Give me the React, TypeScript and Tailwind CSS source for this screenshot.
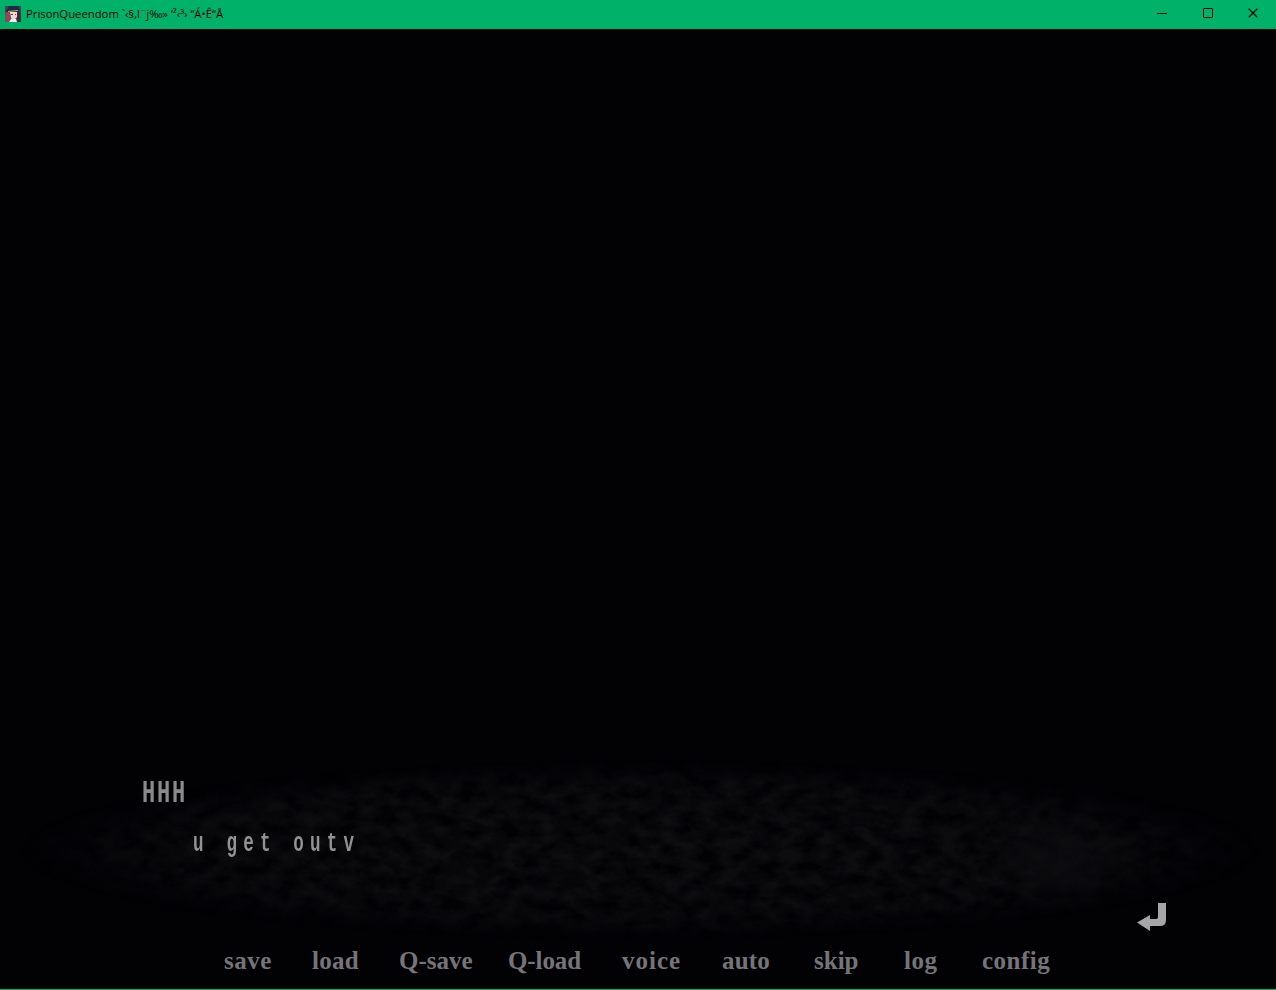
import React from "react";
import { X } from "lucide-react";

const menuItems = [
  { label: "save", width: "w-[88px]", spacing: "tracking-[0.5px]" },
  { label: "load", width: "w-[87px]", spacing: "tracking-[0.3px]" },
  { label: "Q-save", width: "w-[109px]", spacing: "tracking-[0px]" },
  { label: "Q-load", width: "w-[114px]", spacing: "tracking-[-0.1px]" },
  { label: "voice", width: "w-[100px]", spacing: "tracking-[1px]" },
  { label: "auto", width: "w-[92px]", spacing: "tracking-[0.2px]" },
  { label: "skip", width: "w-[90px]", spacing: "tracking-[0px]" },
  { label: "log", width: "w-[78px]", spacing: "tracking-[0.5px]" },
  { label: "config", width: "w-[80px]", spacing: "tracking-[0.5px]" },
];

const AppIcon = () => (
  <svg width="16" height="16" viewBox="0 0 16 16" className="shrink-0">
    <rect width="16" height="16" fill="#4a4050" />
    <path d="M1 5 L4 0 H13 L15 4 L14 6 H2 Z" fill="#1c2a4a" />
    <path d="M3 5 L13 4 V5 L3 6 Z" fill="#c9a860" />
    <path d="M5 6 H12 V11 L10 13 H7 L5 11 Z" fill="#f0d8d4" />
    <path d="M1 6 H5 L6 11 L4 16 H0 V9 Z" fill="#8a4a58" />
    <path d="M12 6 H15 L16 16 H12 Z" fill="#3c2a3a" />
    <rect x="6" y="8" width="2" height="1" fill="#8a2a3a" />
    <rect x="10" y="8" width="1" height="1" fill="#8a2a3a" />
    <path d="M6 13 H11 L12 16 H4 Z" fill="#f4f0f0" />
  </svg>
);

const TitleBar = () => (
  <div className="flex h-[29px] shrink-0 items-center bg-[#00b16a] text-black">
    <div className="ml-[5px] flex items-center gap-[5px] pb-[2px]">
      <AppIcon />
      <span className="font-['Open_Sans',sans-serif] text-[11.3px] leading-none whitespace-nowrap">
        PrisonQueendom `‹§‚l¨j‰» ’²‹³› “Á•Ê“Å
      </span>
    </div>
    <div className="ml-auto flex h-full items-center pb-[3px]">
      <div className="flex w-[46px] justify-center pl-[2px]">
        <div className="h-px w-[10px] bg-black" />
      </div>
      <div className="flex w-[46px] justify-center pl-[2px]">
        <div className="h-[10px] w-[10px] rounded-[1px] border border-black" />
      </div>
      <div className="flex w-[46px] justify-center">
        <X size={16} strokeWidth={1.1} absoluteStrokeWidth />
      </div>
    </div>
  </div>
);

// the grimy smear behind the message window
const Grime = () => (
  <svg className="absolute inset-0 h-full w-full" viewBox="0 0 1276 240" preserveAspectRatio="none">
    <defs>
      <filter id="grain" x="0" y="0" width="100%" height="100%" colorInterpolationFilters="sRGB">
        <feTurbulence type="fractalNoise" baseFrequency="0.05 0.08" numOctaves="5" seed="7" />
        <feColorMatrix values="0 0 0 0 0.055  0 0 0 0 0.052  0 0 0 0 0.063  2 0 0 0 -0.45" />
      </filter>
      <radialGradient id="smear" cx="0.5" cy="0.5" r="0.5">
        <stop offset="0" stopColor="#fff" />
        <stop offset="0.75" stopColor="#fff" stopOpacity="0.8" />
        <stop offset="1" stopColor="#fff" stopOpacity="0" />
      </radialGradient>
      <mask id="smearMask">
        <ellipse cx="640" cy="100" rx="620" ry="90" fill="url(#smear)" />
      </mask>
    </defs>
    <rect width="1276" height="240" filter="url(#grain)" mask="url(#smearMask)" />
  </svg>
);

export default function App() {
  return (
    <div className="flex h-[990px] w-[1276px] flex-col overflow-hidden bg-[#020104]">
      <TitleBar />
      <div className="flex flex-1 flex-col justify-end">
        <div className="relative flex h-[240px] flex-col bg-[radial-gradient(ellipse_70px_50px_at_1060px_110px,#0b0a0e,transparent)]">
          <Grime />
          <div className="relative pl-[142px] pt-[32px] font-['Liberation_Mono',monospace] text-[25px] leading-[26px] font-bold text-[#8a8a8a]">
            <span className="inline-block origin-left scale-x-[0.88] scale-y-[1.22] tracking-[2px]">HHH</span>
          </div>
          <div className="relative pl-[193px] pt-[24px] font-['Liberation_Mono',monospace] text-[22px] leading-[26px] font-bold whitespace-pre text-[#929292]">
            <span className="inline-block origin-left scale-x-[0.8] scale-y-[1.25] tracking-[7.7px]">u get outv</span>
          </div>
          <div className="relative mt-auto flex justify-end pr-[109px]">
            <svg width="30" height="28" viewBox="0 0 30 28" fill="none">
              <path d="M21 0 H29 V17 Q29 23 23 23 H13 V28 L0 19.5 L13 12 V16 H19 Q21 16 21 14 Z" fill="#a6a6a6" />
            </svg>
          </div>
          <div className="relative flex h-[58px] items-center pl-[224px] pt-[2px] font-['Liberation_Serif',serif] text-[25px] font-bold text-[#757478]">
            {menuItems.map((item) => (
              <span key={item.label} className={`${item.width} ${item.spacing} shrink-0 whitespace-nowrap`}>
                {item.label}
              </span>
            ))}
          </div>
          <div className="relative h-px shrink-0 bg-[#00b16a]" />
        </div>
      </div>
    </div>
  );
}
